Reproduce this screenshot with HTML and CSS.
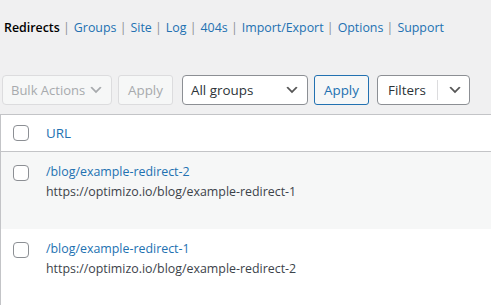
FILE: index.html
```html
<!DOCTYPE html>
<html lang="en">
<head>
  <meta charset="UTF-8">
  <title>Redirects</title>
  <link rel="stylesheet" href="styles.css">
</head>
<body>

  <ul class="subsubsub">
    <li><a class="current" href="#">Redirects</a> |</li>
    <li><a href="#">Groups</a> |</li>
    <li><a href="#">Site</a> |</li>
    <li><a href="#">Log</a> |</li>
    <li><a href="#">404s</a> |</li>
    <li><a href="#">Import/Export</a> |</li>
    <li><a href="#">Options</a> |</li>
    <li><a href="#">Support</a></li>
  </ul>

  <div class="tablenav">
    <div class="select select-bulk disabled">
      <span>Bulk Actions</span>
      <svg class="chevron" viewBox="0 0 20 20"><path d="M5 6l5 5 5-5 2 1-7 7-7-7 2-1z"/></svg>
    </div>
    <button class="button button-apply" disabled>Apply</button>
    <div class="select select-groups">
      <span>All groups</span>
      <svg class="chevron" viewBox="0 0 20 20"><path d="M5 6l5 5 5-5 2 1-7 7-7-7 2-1z"/></svg>
    </div>
    <button class="button button-apply primary-outline">Apply</button>
    <div class="filters">
      <span class="filters-label">Filters</span>
      <span class="filters-toggle">
        <svg class="chevron" viewBox="0 0 20 20"><path d="M5 6l5 5 5-5 2 1-7 7-7-7 2-1z"/></svg>
      </span>
    </div>
  </div>

  <div class="list-table">
    <div class="row head">
      <span class="check"></span>
      <a href="#" class="col-url">URL</a>
    </div>
    <div class="row item alternate">
      <span class="check"></span>
      <div class="col-url">
        <a href="#">/blog/example-redirect-2</a>
        <div class="target">https://optimizo.io/blog/example-redirect-1</div>
      </div>
    </div>
    <div class="row item">
      <span class="check"></span>
      <div class="col-url">
        <a href="#">/blog/example-redirect-1</a>
        <div class="target">https://optimizo.io/blog/example-redirect-2</div>
      </div>
    </div>
  </div>

</body>
</html>
```

FILE: styles.css
```css
body {
  margin: 0;
  background: #f0f0f1;
  font-family: "Open Sans", "Liberation Sans", sans-serif;
  font-size: 12.4px;
  color: #3c434a;
  overflow: hidden;
}

a {
  color: #2271b1;
  text-decoration: none;
}

.subsubsub {
  list-style: none;
  margin: 0;
  padding: 18px 0 0 4px;
  line-height: 20px;
  color: #8c8f94;
  display: flex;
  white-space: nowrap;
}

.subsubsub li {
  margin-right: 4px;
}

.subsubsub a.current {
  color: #000;
  font-weight: 600;
}

.tablenav {
  display: flex;
  align-items: center;
  margin-top: 37px;
  padding-left: 2px;
  height: 30px;
  white-space: nowrap;
}

.select {
  box-sizing: border-box;
  height: 30px;
  border: 1px solid #8c8f94;
  border-radius: 4px;
  background: #fff;
  color: #2c3338;
  display: flex;
  align-items: center;
  justify-content: space-between;
  padding: 0 7px 0 8px;
  font-size: 13.4px;
}

.chevron {
  width: 16px;
  height: 16px;
  fill: #555;
}

.select.disabled {
  background: #f6f7f7;
  border-color: #dcdcde;
  color: #a7aaad;
  font-size: 13px;
}

.select.disabled .chevron {
  fill: #a7aaad;
}

.select-bulk {
  width: 110px;
}

.select-groups {
  width: 126px;
  margin-left: 9px;
}

.button {
  box-sizing: border-box;
  height: 30px;
  width: 55px;
  font-family: inherit;
  font-size: 13.4px;
  border: 1px solid #dcdcde;
  border-radius: 3px;
  background: #f6f7f7;
  color: #a7aaad;
  margin: 0 0 0 6px;
  padding: 0;
}

.button.primary-outline {
  border-color: #2271b1;
  color: #2271b1;
}

.filters {
  box-sizing: border-box;
  width: 93px;
  height: 30px;
  margin-left: 8px;
  border: 1px solid #8c8f94;
  border-radius: 4px;
  background: #fff;
  display: flex;
  align-items: center;
  font-size: 13.4px;
  color: #2c3338;
}

.filters-label {
  padding-left: 10px;
  width: 49px;
  border-right: 1px solid #dcdcde;
  line-height: 20px;
}

.filters-toggle {
  display: flex;
  padding-left: 9px;
}

.list-table {
  margin-top: 9px;
  background: #fff;
  border-top: 1px solid #c3c4c7;
  border-left: 1px solid #c3c4c7;
}

.row {
  display: flex;
  align-items: flex-start;
}

.row.head {
  height: 36px;
  align-items: center;
  border-bottom: 1px solid #c3c4c7;
  font-size: 13.4px;
}

.check {
  box-sizing: border-box;
  width: 16px;
  height: 16px;
  border: 1px solid #8c8f94;
  border-radius: 4px;
  background: #fff;
  margin-left: 12px;
  margin-right: 17px;
  flex: none;
}

.row.item {
  height: 77px;
  padding-top: 12px;
  box-sizing: border-box;
}

.row.item .check {
  margin-top: 1px;
}

.row.item.alternate {
  background: #f6f7f7;
}

.row.item .col-url {
  line-height: 20px;
  margin-top: -2px;
}

.target {
  color: #3c434a;
}
```
